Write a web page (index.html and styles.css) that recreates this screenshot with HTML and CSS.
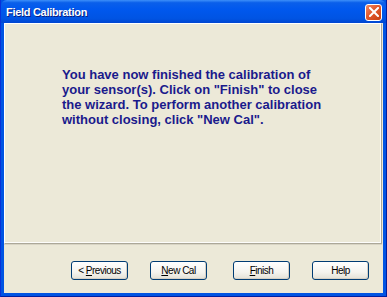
FILE: index.html
```html
<!DOCTYPE html>
<html lang="en">
<head>
  <meta charset="UTF-8" />
  <title>Field Calibration</title>
  <link rel="stylesheet" href="styles.css">
</head>
<body>
<div class="window">
  <!-- Title bar -->
  <div class="titlebar">
    <span class="title">Field Calibration</span>
    <div class="close">
      <svg width="10" height="10" viewBox="0 0 10 10">
        <path d="M1 1 L9 9 M9 1 L1 9" stroke="#fff" stroke-width="2" stroke-linecap="square"/>
      </svg>
    </div>
  </div>

  <!-- Client area -->
  <div class="client">
    <div class="panel">
      <p class="message">You have now finished the calibration of your sensor(s). Click on "Finish" to close the wizard. To perform another calibration without closing, click "New Cal".</p>
    </div>
    <div class="buttons">
      <button class="btn">&lt; <u>P</u>revious</button>
      <button class="btn btn-wide"><u>N</u>ew Cal</button>
      <button class="btn"><u>F</u>inish</button>
      <button class="btn">Help</button>
    </div>
  </div>
</div>
</body>
</html>
```

FILE: styles.css
```css
body {
  margin: 0;
  font-family: 'Liberation Sans', Arial, sans-serif;
  background: #fff;
}

.window {
  width: 387px;
  height: 297px;
  display: flex;
  flex-direction: column;
  background: #0054e3;
  box-sizing: border-box;
  border-left: 1px solid #0831d9;
  border-right: 1px solid #001ea0;
  border-bottom: 1px solid #001ea0;
}

/* Title bar */
.titlebar {
  height: 23px;
  display: flex;
  align-items: center;
  padding: 0 4px 0 5px;
  background: linear-gradient(#3d8ff9 0%, #0a5fea 12%, #0058ee 40%, #0054e3 80%, #0046d1 100%);
  border-radius: 6px 6px 0 0;
}

.title {
  color: #fff;
  font-family: 'Liberation Sans', Arial, sans-serif;
  font-weight: bold;
  font-size: 11px;
  letter-spacing: -0.3px;
  text-shadow: 1px 1px #0a1e80;
}

.close {
  margin-left: auto;
  width: 15px;
  height: 15px;
  margin-top: 1px;
  border: 1px solid #fff;
  border-radius: 3px;
  background: linear-gradient(135deg, #f08a68 0%, #e2582c 45%, #c73f12 100%);
  display: flex;
  align-items: center;
  justify-content: center;
}

/* Client area */
.client {
  flex: 1;
  margin: 0 3px 3px 3px;
  background: #ece9d8;
  display: flex;
  flex-direction: column;
}

.panel {
  height: 219px;
  border-top: 1px solid #fff;
  border-left: 1px solid #fff;
  border-right: 1px solid #aca899;
  border-bottom: 1px solid #aca899;
  box-shadow: inset -1px -1px #fdfdfb, 0 1px #d8d4c4;
  margin-right: 1px;
}

.message {
  margin: 43px 0 0 57px;
  width: 264px;
  color: #1a1a8c;
  font-size: 13px;
  font-weight: bold;
  line-height: 15px;
}

/* Buttons */
.buttons {
  display: flex;
  padding: 17px 0 0 67px;
  gap: 22px;
}

.btn {
  width: 57px;
  height: 19px;
  padding: 0;
  font-family: 'Liberation Sans', Arial, sans-serif;
  font-size: 10px;
  letter-spacing: -0.5px;
  color: #000;
  border: 1px solid #003c74;
  border-radius: 3px;
  background: linear-gradient(#ffffff 0%, #f4f3ee 60%, #e3e1d6 100%);
  box-shadow: inset -1px -1px #d6d0c5;
}

.btn-wide {
  margin-right: 4px;
}
```
